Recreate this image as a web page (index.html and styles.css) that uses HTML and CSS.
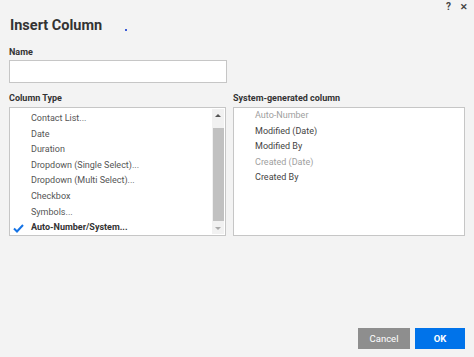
FILE: index.html
```html
<!DOCTYPE html>
<html lang="en">
<head>
  <meta charset="UTF-8">
  <title>Insert Column</title>
  <link rel="stylesheet" href="styles.css">
</head>
<body>
  <div class="dialog">
    <div class="topbar">
      <span class="help">?</span>
      <span class="close">&#x2715;</span>
    </div>
    <h1 class="title">Insert Column <span class="dot"></span></h1>

    <label class="label">Name</label>
    <input type="text" class="name-input">

    <div class="columns">
      <div class="col">
        <label class="label">Column Type</label>
        <div class="listbox">
          <ul class="items">
            <li>Contact List...</li>
            <li>Date</li>
            <li>Duration</li>
            <li>Dropdown (Single Select)...</li>
            <li>Dropdown (Multi Select)...</li>
            <li>Checkbox</li>
            <li>Symbols...</li>
            <li class="selected">
              <svg class="check" width="11" height="9" viewBox="0 0 11 9"><path d="M1 4.5 L4 7.5 L10 1" fill="none" stroke="#1473e6" stroke-width="2"/></svg>
              Auto-Number/System...
            </li>
          </ul>
          <div class="scrollbar">
            <span class="arrow up"></span>
            <span class="thumb"></span>
            <span class="arrow down"></span>
          </div>
        </div>
      </div>
      <div class="col col-right">
        <label class="label">System-generated column</label>
        <div class="listbox">
          <ul class="items items-sys">
            <li class="disabled">Auto-Number</li>
            <li>Modified (Date)</li>
            <li>Modified By</li>
            <li class="disabled">Created (Date)</li>
            <li>Created By</li>
          </ul>
        </div>
      </div>
    </div>

    <div class="footer">
      <button class="btn cancel">Cancel</button>
      <button class="btn ok">OK</button>
    </div>
  </div>
</body>
</html>
```

FILE: styles.css
```css
body { margin: 0; background: #f3f3f3; font-family: Roboto, "Liberation Sans", sans-serif; color: #333; }
.dialog { width: 474px; height: 357px; box-sizing: border-box; padding: 0 9px; display: flex; flex-direction: column; }
.topbar { display: flex; justify-content: flex-end; gap: 9px; height: 14px; padding-top: 1px; margin-right: -3px; font-size: 10px; color: #444; }
.help { font-weight: bold; }
.close { font-size: 9px; font-weight: bold; line-height: 13px; }
.title { margin: 2px 0 0 1px; font-size: 14.5px; font-weight: bold; color: #333; line-height: 18px; }
.dot { display: inline-block; width: 2px; height: 2px; background: #3b5bd6; margin-left: 19px; vertical-align: -1px; }
.label { display: block; font-size: 9px; font-weight: bold; color: #333; margin-top: 12px; line-height: 11px; }
.name-input { width: 218px; height: 23px; box-sizing: border-box; margin-top: 2px; border: 1px solid #c6c6c6; background: #fff; padding: 0 6px; }
.columns { display: flex; gap: 7px; }
.columns .label { margin-top: 10px; margin-bottom: 3px; }
.col { width: 218px; }
.col-right { width: 233px; }
.listbox { height: 129px; box-sizing: border-box; border: 1px solid #c6c6c6; background: #fff; display: flex; }
.items { list-style: none; margin: 0; padding: 3px 0 0 21px; flex: 1; font-size: 9px; line-height: 15.6px; color: #555; }
.items-sys { padding-top: 0; color: #444; }
.items li.disabled { color: #a0a0a0; }
.items li.selected { font-weight: bold; color: #333; position: relative; }
.check { position: absolute; left: -18px; top: 4px; }
.scrollbar { width: 12px; margin: 1px 1px 1px 0; background: #f1f1f1; display: flex; flex-direction: column; align-items: center; }
.arrow { width: 0; height: 0; border-left: 3px solid transparent; border-right: 3px solid transparent; }
.arrow.up { border-bottom: 3px solid #555; margin: 5px 0 11px; }
.arrow.down { border-top: 3px solid #aaa; margin: 6px 0 4px; }
.thumb { width: 11px; flex: 1; background: #c1c1c1; }
.footer { margin-top: auto; display: flex; justify-content: flex-end; gap: 5px; padding: 0 0 8px; }
.btn { height: 21px; border: none; color: #fff; font-family: Roboto, "Liberation Sans", sans-serif; font-size: 9.5px; padding: 0; }
.cancel { width: 52px; background: #8e8e8e; }
.ok { width: 50px; background: #0073ea; font-weight: bold; }
```
